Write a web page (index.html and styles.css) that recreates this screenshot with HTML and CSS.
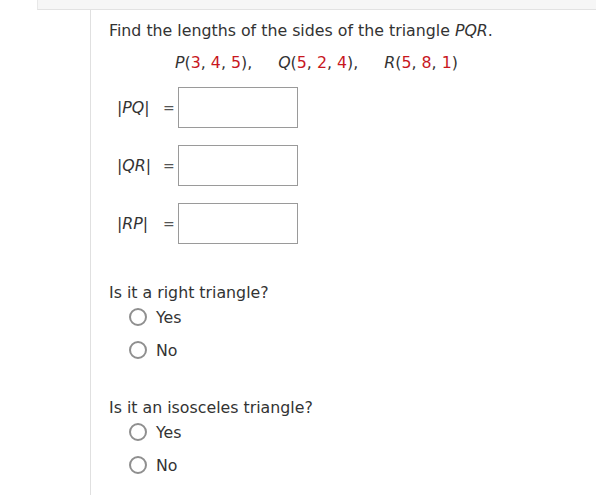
FILE: index.html
```html
<!DOCTYPE html>
<html>
<head>
<meta charset="utf-8">
<link rel="stylesheet" href="styles.css">
</head>
<body>
<div class="topbar"></div>
<div class="content">
  <p class="question">Find the lengths of the sides of the triangle <i>PQR</i>.</p>
  <p class="points"><i>P</i>(<span class="num">3</span>, <span class="num">4</span>, <span class="num">5</span>),<span class="sp"></span><i>Q</i>(<span class="num">5</span>, <span class="num">2</span>, <span class="num">4</span>),<span class="sp"></span><i>R</i>(<span class="num">5</span>, <span class="num">8</span>, <span class="num">1</span>)</p>
  <div class="answers">
    <div class="row"><span class="lbl">|<i>PQ</i>|</span><span class="eq">=</span><span class="box"></span></div>
    <div class="row"><span class="lbl">|<i>QR</i>|</span><span class="eq">=</span><span class="box"></span></div>
    <div class="row"><span class="lbl">|<i>RP</i>|</span><span class="eq">=</span><span class="box"></span></div>
  </div>
  <div class="group first">
    <p class="ask">Is it a right triangle?</p>
    <div class="opt"><span class="radio"></span>Yes</div>
    <div class="opt"><span class="radio"></span>No</div>
  </div>
  <div class="group second">
    <p class="ask">Is it an isosceles triangle?</p>
    <div class="opt"><span class="radio"></span>Yes</div>
    <div class="opt"><span class="radio"></span>No</div>
  </div>
</div>
</body>
</html>
```
FILE: styles.css
```css
html, body {
  margin: 0;
  padding: 0;
  background: #fff;
}
body {
  font-family: "DejaVu Sans", Verdana, sans-serif;
  font-size: 15.8px;
  color: #333;
  height: 495px;
  overflow: hidden;
}
.topbar {
  margin-left: 37px;
  height: 9px;
  background: #f6f6f6;
  border-bottom: 1px solid #e2e2e2;
  border-left: 1px solid #e8e8e8;
}
.content {
  margin-left: 90px;
  border-left: 1px solid #e0e0e0;
  padding-left: 18px;
  padding-top: 11px;
  height: 490px;
}
p { margin: 0; }
.question { line-height: 20px; }
.points {
  margin-top: 12px;
  padding-left: 66px;
  line-height: 20px;
}
.points .sp { display: inline-block; width: 26px; }
.num { color: #c8171e; }
.answers {
  margin-top: 14px;
  display: flex;
  flex-direction: column;
  gap: 17px;
}
.row {
  display: flex;
  align-items: center;
  padding-left: 8px;
}
.lbl { width: 46px; }
.eq { width: 15px; color: #555; font-size: 14px; }
.box {
  width: 118px;
  height: 39px;
  border: 1px solid #9a9a9a;
  box-sizing: content-box;
}
.group.first { margin-top: 39px; }
.group.second { margin-top: 36px; }
.ask { line-height: 20px; }
.opt {
  display: flex;
  align-items: center;
  padding-left: 20px;
  height: 24px;
  margin-top: 2px;
}
.opt + .opt { margin-top: 9px; }
.radio {
  width: 14px;
  height: 14px;
  border: 2px solid #8f8f8f;
  border-radius: 50%;
  margin-right: 9px;
  background: #fff;
}
```
